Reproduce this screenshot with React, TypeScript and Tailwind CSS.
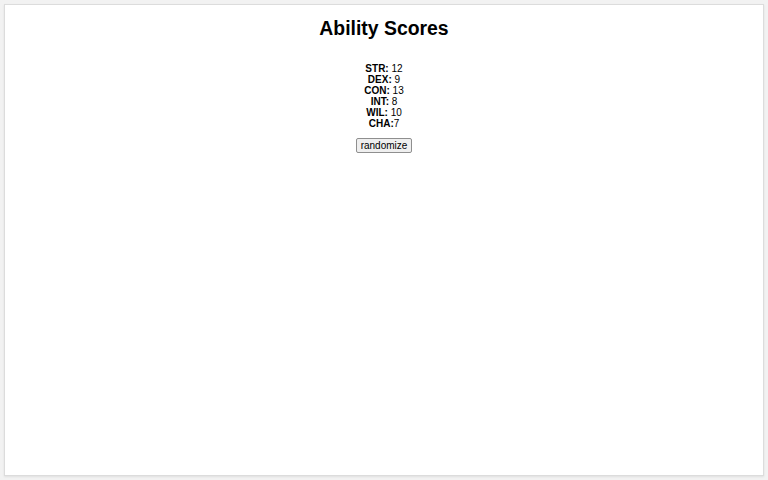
const stats: [string, number, string][] = [
  ["STR", 12, " "],
  ["DEX", 9, " "],
  ["CON", 13, " "],
  ["INT", 8, " "],
  ["WIL", 10, " "],
  ["CHA", 7, ""],
];

export default function App() {
  return (
    <div className="h-[480px] w-[768px] bg-[#f2f2f2] p-[4px] font-['Liberation_Sans',Arial,sans-serif] text-black">
      <div className="flex h-full flex-col items-center border border-[#dcdcdc] bg-white pt-[12px] shadow-[0_1px_2px_rgba(0,0,0,0.08)]">
        <h1 className="text-[19.4px] font-bold leading-[23px]">Ability Scores</h1>
        <div className="mt-[23px] flex flex-col items-center text-[10px] leading-[11px]">
          {stats.map(([name, value, sep]) => (
            <div key={name} className="whitespace-pre">
              <span className="font-bold">{name}:</span>
              {sep}
              {value}
            </div>
          ))}
        </div>
        <button className="mt-[9px] h-[15px] rounded-[2px] border border-[#8f8f8f] bg-[#efefef] px-[4px] text-[10px] leading-[12px]">
          randomize
        </button>
      </div>
    </div>
  );
}
